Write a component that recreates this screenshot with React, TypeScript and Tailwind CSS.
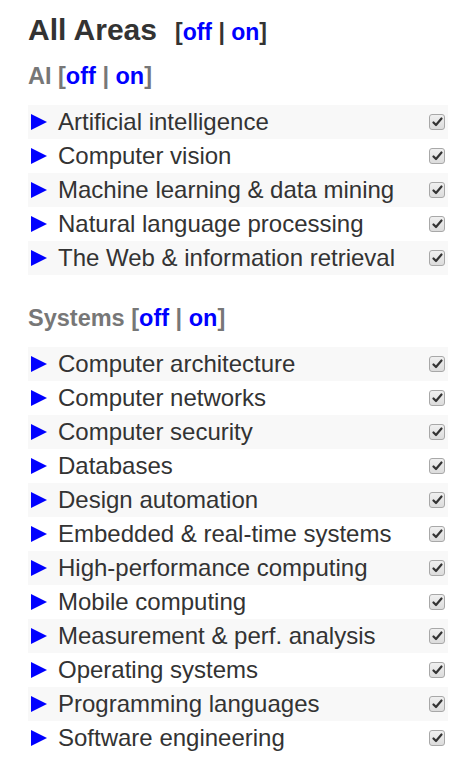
import React from "react";

const groups = [
  {
    name: "AI",
    items: [
      "Artificial intelligence",
      "Computer vision",
      "Machine learning & data mining",
      "Natural language processing",
      "The Web & information retrieval",
    ],
  },
  {
    name: "Systems",
    items: [
      "Computer architecture",
      "Computer networks",
      "Computer security",
      "Databases",
      "Design automation",
      "Embedded & real-time systems",
      "High-performance computing",
      "Mobile computing",
      "Measurement & perf. analysis",
      "Operating systems",
      "Programming languages",
      "Software engineering",
    ],
  },
];

function Toggle({ dark }: { dark?: boolean }) {
  return (
    <span className={dark ? "text-[#333333]" : "text-[#777777]"}>
      [<span className="text-[#0000ff]">off</span> | <span className="text-[#0000ff]">on</span>]
    </span>
  );
}

function Check() {
  return (
    <span className="flex h-[16px] w-[16px] items-center justify-center rounded-[3px] border border-[#a8a8a8] bg-gradient-to-b from-[#f0f0f0] to-[#dcdcdc]">
      <svg width="11" height="10" viewBox="0 0 11 10">
        <path d="M1.5 5.5 L4 8 L9.5 1.5" fill="none" stroke="#333333" strokeWidth="2.2" strokeLinecap="round" strokeLinejoin="round" />
      </svg>
    </span>
  );
}

export default function App() {
  return (
    <div className="min-h-[761px] bg-white pl-[28px] pr-[25px] pt-[12px] text-[#333333]" style={{ fontFamily: '"Liberation Sans", Arial, sans-serif' }}>
      <div className="flex items-baseline">
        <h1 className="text-[30px] font-bold leading-[36px]">All Areas</h1>
        <span className="ml-[18px] text-[23px] font-bold leading-[36px]">
          <Toggle dark />
        </span>
      </div>
      {groups.map((g, gi) => (
        <div key={g.name} className={gi === 0 ? "mt-[12px]" : "mt-[29px]"}>
          <h2 className="text-[23.5px] font-bold leading-[28px] text-[#777777]">
            {g.name} <Toggle />
          </h2>
          <ul className="mt-[15px]">
            {g.items.map((it, i) => (
              <li
                key={it}
                className={`flex h-[34px] items-center ${i % 2 === 0 ? "bg-[#f8f8f8]" : "bg-white"}`}
              >
                <svg width="16" height="16" viewBox="0 0 16 16" className="ml-[3px] mr-[11px] shrink-0">
                  <path d="M0 0 L16 8 L0 16 Z" fill="#0000ff" />
                </svg>
                <span className="flex-1 text-[24px] leading-[34px] text-[#333333]">{it}</span>
                <span className="mr-[3px]">
                  <Check />
                </span>
              </li>
            ))}
          </ul>
        </div>
      ))}
    </div>
  );
}
